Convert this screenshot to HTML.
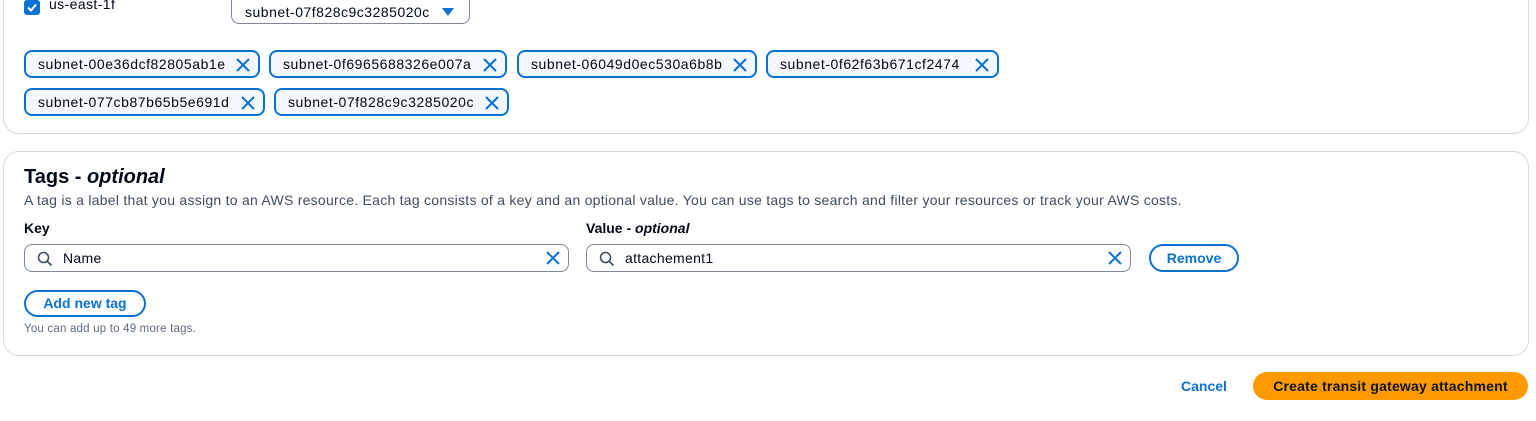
<!DOCTYPE html>
<html><head><style>
body{margin:0;width:1536px;height:421px;background:#fff;font-family:"Liberation Sans",sans-serif;color:#000716;position:relative;overflow:hidden}
.a{position:absolute}
.panel{position:absolute;border:1px solid #d5dbdb;border-radius:16px;background:#fff;box-sizing:border-box}
.tok{position:absolute;height:28px;box-sizing:border-box;border:2px solid #0972d3;border-radius:8px;background:#f2f8fd;font-size:14px;letter-spacing:.55px;line-height:24px;padding-left:12px;color:#000716}
.tok svg,.inp svg.x{position:absolute;right:8px;top:6px}
.inp{position:absolute;height:28px;box-sizing:border-box;border:1px solid #7d8998;border-radius:8px;font-size:14px;letter-spacing:.3px;line-height:26px;padding-left:38px}
.inp svg.s{position:absolute;left:12px;top:6px}
.btn{position:absolute;box-sizing:border-box;border:2px solid #0972d3;border-radius:20px;color:#0972d3;font-weight:bold;font-size:14px;text-align:center}
</style></head><body>
<div class="panel" style="left:3px;top:-30px;width:1526px;height:164px"></div>
<div class="a" style="left:24px;top:0;width:16px;height:15px;background:#0972d3;border-radius:3px"><svg width="16" height="15"><path d="M4 7.5l3 3 5-6" stroke="#fff" stroke-width="2" fill="none"/></svg></div>
<div class="a" style="left:49px;top:-4px;font-size:14px;letter-spacing:.4px">us-east-1f</div>
<div class="a" style="left:231px;top:-10px;width:239px;height:34px;border:1px solid #7d8998;border-radius:8px;box-sizing:border-box;font-size:14px;letter-spacing:.5px;padding:13px 0 0 13px">subnet-07f828c9c3285020c <svg width="12" height="10" style="margin-left:8px"><path d="M0 1h12L6 9z" fill="#0972d3"/></svg></div>
<div class="tok" style="left:24px;top:50px;width:236px">subnet-00e36dcf82805ab1e<svg width="14" height="14"><path d="M1 1l12 12M13 1L1 13" stroke="#0972d3" stroke-width="2"/></svg></div>
<div class="tok" style="left:269px;top:50px;width:238px">subnet-0f6965688326e007a<svg width="14" height="14"><path d="M1 1l12 12M13 1L1 13" stroke="#0972d3" stroke-width="2"/></svg></div>
<div class="tok" style="left:517px;top:50px;width:240px">subnet-06049d0ec530a6b8b<svg width="14" height="14"><path d="M1 1l12 12M13 1L1 13" stroke="#0972d3" stroke-width="2"/></svg></div>
<div class="tok" style="left:766px;top:50px;width:233px">subnet-0f62f63b671cf2474<svg width="14" height="14"><path d="M1 1l12 12M13 1L1 13" stroke="#0972d3" stroke-width="2"/></svg></div>
<div class="tok" style="left:24px;top:88px;width:241px">subnet-077cb87b65b5e691d<svg width="14" height="14"><path d="M1 1l12 12M13 1L1 13" stroke="#0972d3" stroke-width="2"/></svg></div>
<div class="tok" style="left:274px;top:88px;width:235px">subnet-07f828c9c3285020c<svg width="14" height="14"><path d="M1 1l12 12M13 1L1 13" stroke="#0972d3" stroke-width="2"/></svg></div>

<div class="panel" style="left:3px;top:151px;width:1526px;height:205px"></div>
<div class="a" style="left:24px;top:166px;font-size:20px;font-weight:bold">Tags - <i>optional</i></div>
<div class="a" style="left:24px;top:192px;font-size:14px;letter-spacing:.26px;color:#414d5c">A tag is a label that you assign to an AWS resource. Each tag consists of a key and an optional value. You can use tags to search and filter your resources or track your AWS costs.</div>
<div class="a" style="left:24px;top:220px;font-size:14px;font-weight:bold">Key</div>
<div class="a" style="left:586px;top:220px;font-size:14px;font-weight:bold">Value - <i>optional</i></div>
<div class="inp" style="left:24px;top:244px;width:545px">Name<svg class="s" width="16" height="16"><circle cx="6.5" cy="6.5" r="5" stroke="#414d5c" stroke-width="1.6" fill="none"/><path d="M10 10l4.5 4.5" stroke="#414d5c" stroke-width="1.6"/></svg><svg class="x" width="14" height="14"><path d="M1 1l12 12M13 1L1 13" stroke="#0972d3" stroke-width="2"/></svg></div>
<div class="inp" style="left:586px;top:244px;width:545px">attachement1<svg class="s" width="16" height="16"><circle cx="6.5" cy="6.5" r="5" stroke="#414d5c" stroke-width="1.6" fill="none"/><path d="M10 10l4.5 4.5" stroke="#414d5c" stroke-width="1.6"/></svg><svg class="x" width="14" height="14"><path d="M1 1l12 12M13 1L1 13" stroke="#0972d3" stroke-width="2"/></svg></div>
<div class="btn" style="left:1149px;top:244px;width:90px;height:28px;line-height:24px">Remove</div>
<div class="btn" style="left:24px;top:290px;width:122px;height:27px;line-height:23px">Add new tag</div>
<div class="a" style="left:24px;top:323px;font-size:11.5px;letter-spacing:.2px;color:#5f6b7a">You can add up to 49 more tags.</div>
<div class="a" style="left:1181px;top:378px;font-size:14px;font-weight:bold;color:#0972d3">Cancel</div>
<div class="a" style="left:1253px;top:372px;width:275px;height:28px;border-radius:20px;background:#ff9900;font-size:14px;letter-spacing:.2px;font-weight:bold;line-height:28px;text-align:center;color:#0f141a">Create transit gateway attachment</div>
</body></html>
